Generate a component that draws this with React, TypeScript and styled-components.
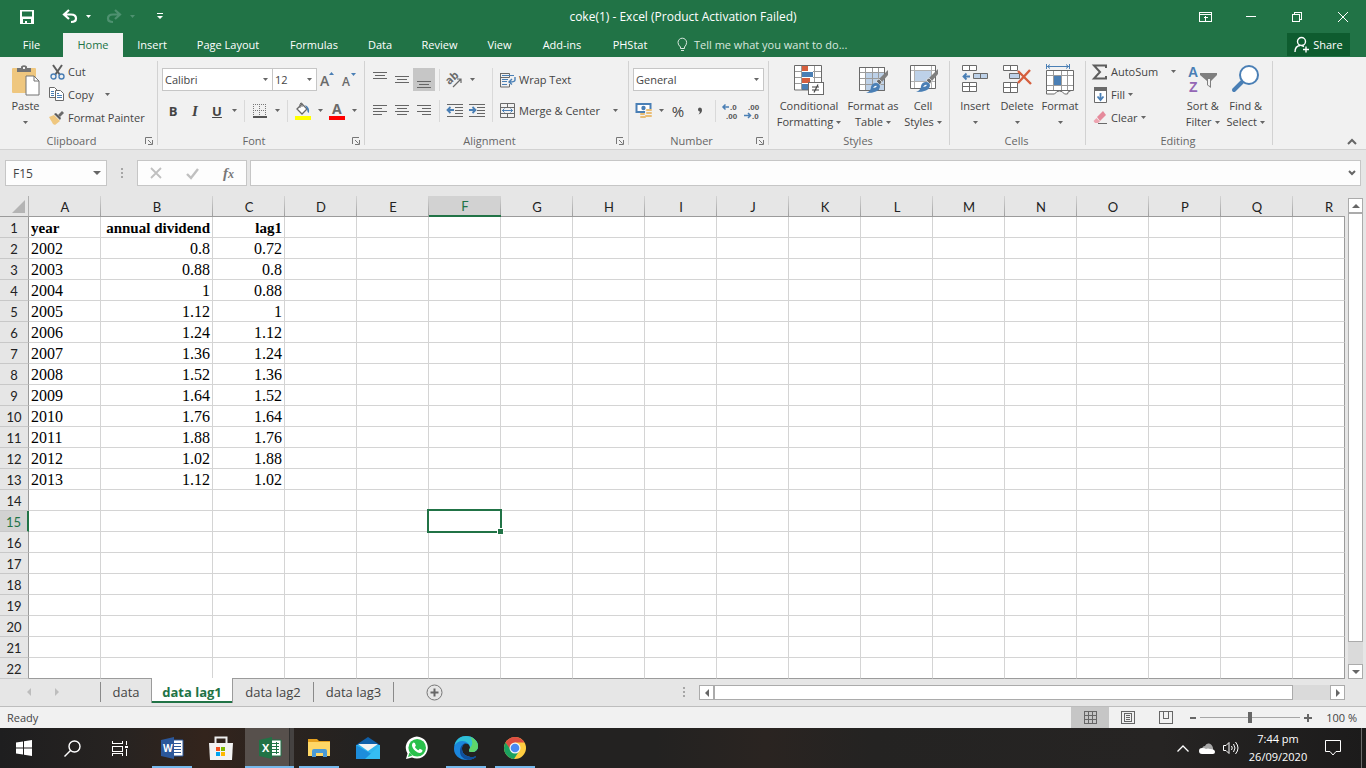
import React from "react";
import styled, { createGlobalStyle, css } from "styled-components";

const green = "#217346";
const ui = `"Open Sans", "Noto Sans", sans-serif`;
const blue = "#4a7fb5";
const ink = "#6a6a6a";

const GlobalStyle = createGlobalStyle`
  * { box-sizing: border-box; }
  body { margin: 0; background: #e6e6e6; font: 11px/16px ${ui}; color: #444; }
  button, input, select { font: inherit; color: inherit; margin: 0; padding: 0; border: 0; background: none; border-radius: 0; }
  button { display: inline-flex; align-items: center; white-space: nowrap; }
  svg { display: block; flex: none; overflow: visible; }
  input:focus, select:focus { outline: none; }
`;

const Page = styled.div`
  display: flex;
  flex-direction: column;
  min-height: 100vh;
  overflow: hidden;
`;

/* ---------- title bar and tabs ---------- */
const TitleBar = styled.header`
  display: grid;
  grid-template-columns: 1fr auto 1fr;
  align-items: center;
  height: 33px;
  background: ${green};
  color: #fff;
`;
const QuickAccess = styled.div`
  display: flex;
  align-items: center;
  padding-left: 19px;
`;
const QuickButton = styled.button<{ $w: number; $dim?: boolean }>`
  width: ${(p) => p.$w}px;
  height: 24px;
  color: ${(p) => (p.$dim ? "#4e9170" : "#fff")};
`;
const Title = styled.h1`
  margin: 0;
  font-size: 12px;
  font-weight: 400;
`;
const WindowControls = styled.div`
  display: flex;
  justify-content: flex-end;
`;
const WindowButton = styled.button`
  justify-content: center;
  width: 46px;
  height: 30px;
`;
const TabBar = styled.nav`
  display: flex;
  align-items: stretch;
  height: 24px;
  background: ${green};
  color: #fff;
`;
const RibbonTab = styled.button<{ $w: number; $active?: boolean }>`
  justify-content: center;
  width: ${(p) => p.$w}px;
  ${(p) => p.$active && css`background: #f1f1f1; color: ${green};`}
`;
const TellMe = styled.button`
  gap: 6px;
  margin-left: 14px;
  color: #d9e8df;
`;
const ShareButton = styled.button`
  justify-content: center;
  gap: 3px;
  width: 63px;
  height: 23px;
  margin: 0 16px 0 auto;
  background: #0e5c2f;
`;

/* ---------- ribbon ---------- */
const Ribbon = styled.div`
  display: flex;
  height: 93px;
  background: #f1f1f1;
  border-bottom: 1px solid #d2d2d2;
`;
const Group = styled.section<{ $w: number }>`
  display: flex;
  flex-direction: column;
  flex: none;
  width: ${(p) => p.$w}px;
`;
const GroupBody = styled.div`
  display: flex;
  flex: 1;
  padding-left: 4px;
`;
const GroupFooter = styled.footer`
  display: flex;
  align-items: center;
  height: 17px;
  padding-right: 2px;
  color: #666;
`;
const GroupName = styled.span`
  flex: 1;
  text-align: center;
`;
const Launcher = styled.button`
  justify-content: center;
  width: 12px;
  height: 14px;
`;
const Divider = styled.div`
  flex: none;
  width: 1px;
  margin: 4px 0;
  background: #d2d2d2;
`;
const Rows = styled.div`
  display: flex;
  flex-direction: column;
  gap: 8px;
  padding-top: 11px;
`;
const Row = styled.div`
  display: flex;
  align-items: center;
  height: 23px;
`;
const ToolRule = styled.div`
  width: 1px;
  height: 22px;
  margin: 0 4px;
  background: #d9d9d9;
`;
const TallRule = styled.div`
  width: 1px;
  height: 54px;
  margin: 11px 7px 0 4px;
  background: #d9d9d9;
`;
const Tool = styled.button<{ $on?: boolean }>`
  justify-content: center;
  width: 22px;
  height: 23px;
  font-size: 13px;
  font-weight: 700;
  background: ${(p) => (p.$on ? "#c6c6c6" : "transparent")};
`;
const ArrowButton = styled.button`
  justify-content: center;
  width: 12px;
  height: 23px;
`;
const Italic = styled.i`
  font-family: "Liberation Serif", serif;
  font-size: 15px;
`;
const Percent = styled.span`
  font-size: 15px;
  font-weight: 400;
`;
const SmallList = styled.div`
  display: flex;
  flex-direction: column;
  align-items: flex-start;
  padding: 3px 5px 0 2px;
`;
const SmallButton = styled.button<{ $gap?: number }>`
  gap: 3px;
  height: 23px;
  svg:last-child:not(:first-child) { margin-left: ${(p) => p.$gap ?? 0}px; }
`;
const IconSlot = styled.span`
  display: inline-flex;
  justify-content: center;
  width: 16px;
`;
const BigButton = styled.button<{ $w: number }>`
  flex-direction: column;
  width: ${(p) => p.$w}px;
  padding-top: 8px;
  height: 75px;
`;
const BigIcon = styled.span`
  display: flex;
  justify-content: center;
  height: 33px;
`;
const BigLine = styled.span`
  display: flex;
  align-items: center;
  gap: 3px;
  height: 16px;
`;
const Combo = styled.label<{ $w: number; $joined?: boolean }>`
  display: flex;
  align-items: center;
  width: ${(p) => p.$w}px;
  height: 23px;
  padding: 0 4px 0 2px;
  margin-left: ${(p) => (p.$joined ? -1 : 0)}px;
  background: #fff;
  border: 1px solid #c6c6c6;
`;
const ComboSelect = styled.select`
  appearance: none;
  flex: 1;
  min-width: 0;
  height: 20px;
`;
const Collapse = styled.button`
  align-self: flex-end;
  margin: 0 9px 4px auto;
`;

/* ---------- formula bar ---------- */
const FormulaRow = styled.div`
  display: flex;
  height: 46px;
  padding: 10px 5px;
`;
const NameBox = styled.label`
  display: flex;
  align-items: center;
  width: 102px;
  padding: 0 5px 0 7px;
  background: #fdfdfd;
  border: 1px solid #c6c6c6;
  font-size: 12px;
`;
const PlainInput = styled.input`
  flex: 1;
  min-width: 0;
  height: 22px;
`;
const DotsSlot = styled.div`
  display: flex;
  align-items: center;
  justify-content: center;
  width: 30px;
`;
const FormulaTools = styled.div`
  display: flex;
  justify-content: space-around;
  width: 110px;
  margin-right: 3px;
  background: #fdfdfd;
  border: 1px solid #c6c6c6;
`;
const FormulaBox = styled(NameBox)`
  flex: 1;
  padding: 0 4px 0 7px;
`;
const Fx = styled.i`
  font: italic 700 15px "Liberation Serif", serif;
  color: #777;
`;
const FxSub = styled.span`
  font-size: 12px;
`;

/* ---------- sheet ---------- */
const SheetArea = styled.main`
  display: flex;
  flex: 1;
`;
const Table = styled.table`
  flex: 1;
  min-width: 0;
  width: 100%;
  table-layout: fixed;
  border-collapse: separate;
  border-spacing: 0;
  font: 16px/18px "Liberation Serif", serif;
  color: #000;
`;
const headText = css`
  padding: 0;
  font: 13px/18px Lato, sans-serif;
  color: #222;
`;
const ColHead = styled.th<{ $on?: boolean; $last?: boolean }>`
  ${headText}
  height: 21px;
  padding: 2px 0 0 ${(p) => (p.$last ? 20 : 0)}px;
  border-bottom: 1px solid #9b9b9b;
  background: ${(p) => (p.$last ? "none" : "linear-gradient(#d4d4d4, #a0a0a0) right / 1px 100% no-repeat")};
  ${(p) => p.$on && css`
    padding-top: 1px;
    background-color: #d2d2d2;
    color: ${green};
    border-bottom: 2px solid ${green};
  `}
`;
const Corner = styled.th`
  padding: 0;
  height: 21px;
  border-bottom: 1px solid #9b9b9b;
  border-right: 1px solid #b0b0b0;
  svg { margin-left: 12px; }
`;
const RowHead = styled.th<{ $on?: boolean }>`
  ${headText}
  height: 21px;
  padding-top: 2px;
  border-right: 1px solid #9b9b9b;
  border-bottom: 1px solid #c8c8c8;
  ${(p) => p.$on && css`
    background: #d2d2d2;
    color: ${green};
    border-right: 2px solid ${green};
  `}
`;
const Cell = styled.td<{ $right?: boolean; $bold?: boolean }>`
  position: relative;
  height: 21px;
  padding: 2px 2px 0;
  background: #fff;
  border-right: 1px solid #d4d4d4;
  border-bottom: 1px solid #d4d4d4;
  text-align: ${(p) => (p.$right ? "right" : "left")};
  ${(p) => p.$bold && css`font-size: 15px; font-weight: 700;`}
  white-space: nowrap;
  &:last-child { border-right-color: #9b9b9b; }
  tr:last-child > & { border-bottom-color: #9b9b9b; }
`;
const Selection = styled.div`
  position: absolute;
  z-index: 1;
  inset: -2px;
  border: 2px solid ${green};
  &::after {
    content: "";
    position: absolute;
    right: -3px;
    bottom: -3px;
    width: 5px;
    height: 5px;
    background: ${green};
    box-shadow: 0 0 0 1px #fff;
  }
`;
const VScroll = styled.div`
  display: flex;
  flex-direction: column;
  width: 15px;
  margin: 2px 3px 0;
  background: #dadada;
`;
const scrollBox = css`
  justify-content: center;
  background: #fff;
  border: 1px solid #ababab;
`;
const ScrollButton = styled.button`
  ${scrollBox}
  width: 15px;
  height: 15px;
`;
const VThumb = styled.div`
  ${scrollBox}
  flex: 1;
  margin: 0 0 22px;
`;

/* ---------- sheet tabs and status bar ---------- */
const SheetBar = styled.div`
  display: flex;
  height: 28px;
  padding-right: 21px;
  border-bottom: 1px solid #bdbdbd;
`;
const SheetNav = styled.div`
  display: flex;
  width: 100px;
  padding-left: 15px;
`;
const NavButton = styled.button`
  justify-content: center;
  width: 28px;
  height: 26px;
`;
const SheetTab = styled.button<{ $w: number; $active?: boolean; $first?: boolean }>`
  position: relative;
  justify-content: center;
  width: ${(p) => p.$w}px;
  height: 20px;
  margin-top: 3px;
  padding-bottom: 1px;
  font-size: 13px;
  border-right: 1px solid #8a8a8a;
  ${(p) => p.$first && css`
    border-left: 1px solid #8a8a8a;
    border-right: 0;
  `}
  ${(p) => p.$active && css`
    height: 25px;
    margin-top: -1px;
    padding: 2px 0 0;
    background: #fff;
    color: ${green};
    font-weight: 700;
    border: solid #9b9b9b;
    border-width: 0 1px;
    box-shadow: inset 0 -2px ${green};
  `}
`;
const AddSheet = styled.button`
  height: 26px;
  margin-left: 32px;
`;
const HScroll = styled.div`
  display: flex;
  margin-top: 6px;
  width: 48%;
  height: 15px;
  background: #dadada;
`;
const HThumb = styled.div`
  ${scrollBox}
  flex: 1;
  margin-right: 37px;
`;
const SheetDots = styled.div`
  display: flex;
  align-items: center;
  height: 26px;
  margin: 0 14px 0 auto;
`;
const StatusBar = styled.footer`
  display: flex;
  align-items: center;
  height: 21px;
  padding: 0 9px 0 7px;
  background: #f1f1f1;
`;
const StatusText = styled.span`
  margin-right: auto;
`;
const ViewButton = styled.button<{ $on?: boolean }>`
  justify-content: center;
  width: 38px;
  height: 21px;
  background: ${(p) => (p.$on ? "#c6c6c6" : "transparent")};
`;
const ZoomButton = styled.button`
  justify-content: center;
  width: 15px;
  height: 21px;
`;
const ZoomSlider = styled.input`
  appearance: none;
  width: 100px;
  height: 11px;
  background: linear-gradient(#a6a6a6, #a6a6a6) center / 100% 1px no-repeat;
  &::-webkit-slider-thumb {
    appearance: none;
    width: 4px;
    height: 11px;
    background: #666;
  }
`;
const ZoomValue = styled.button`
  justify-content: flex-end;
  width: 42px;
`;

/* ---------- taskbar ---------- */
const Taskbar = styled.footer`
  display: flex;
  height: 40px;
  color: #fff;
  background: linear-gradient(90deg, #1e1e1f 0, #272321 9%, #33241c 15%, #2b231f 20%, #232221 27%, #232221 48%, #2a2421 56%, #242322 64%, #262423 85%, #1c1b1b 100%);
`;
const SystemButton = styled.button`
  justify-content: center;
  width: 48px;
  &:nth-child(3) { margin-right: 3px; }
`;
const AppButton = styled.button<{ $state?: "open" | "active" }>`
  justify-content: center;
  width: 49px;
  ${(p) => p.$state === "open" && css`
    background: linear-gradient(#76b9ed, #76b9ed) center bottom / 40px 2px no-repeat;
  `}
  ${(p) => p.$state === "active" && css`
    background: linear-gradient(90deg, #57504c 44px, #2f2e2d 44px, #2f2e2d 45px, #454241 45px);
    box-shadow: inset 0 -2px #76b9ed;
  `}
`;
const Tray = styled.div`
  display: flex;
  align-items: center;
  margin-left: auto;
  border-right: 1px solid #6b6b6b;
  margin-right: 4px;
`;
const TrayButton = styled.button`
  justify-content: center;
  width: 24px;
  height: 40px;
`;
const Clock = styled.time`
  width: 70px;
  text-align: center;
  line-height: 18px;
`;
const NoticeButton = styled(TrayButton)`
  width: 40px;
  margin-right: 8px;
`;

/* ---------- drawings ---------- */
type SvgProps = { w: number; h: number; children: React.ReactNode; crisp?: boolean };
const Svg = ({ w, h, children, crisp }: SvgProps) => (
  <svg width={w} height={h} viewBox={`0 0 ${w} ${h}`} fill="none" shapeRendering={crisp ? "crispEdges" : undefined} aria-hidden="true">
    {children}
  </svg>
);
const Caret = ({ big }: { big?: boolean }) =>
  big ? (
    <Svg w={8} h={4}><path d="M0 0h8L4 4z" fill="#666" /></Svg>
  ) : (
    <Svg w={5} h={3}><path d="M0 0h5L2.5 3z" fill="#666" /></Svg>
  );
const Triangle = ({ d, color = "#666" }: { d: string; color?: string }) => (
  <Svg w={8} h={8}><path d={d} fill={color} /></Svg>
);
const Dots = () => (
  <Svg w={2} h={10} crisp><path d="M0 0h2v2H0zM0 4h2v2H0zM0 8h2v2H0z" fill="#a6a6a6" /></Svg>
);
const SaveIcon = () => (
  <Svg w={16} h={16}><path fillRule="evenodd" fill="#fff" d="M1 1h14v14H1zM3 2.500v5h10v-5zM4 10v4h2v-2h2v2h4v-4z" /></Svg>
);
const UndoIcon = () => (
  <Svg w={16} h={14}><path d="M7 0L2 4.500l5 4.500M2.500 4.500H9c3 0 5 1.500 5 4 0 2-1.500 3.500-5 3.500" stroke="currentColor" strokeWidth="2.200" /></Svg>
);
const RedoIcon = () => (
  <Svg w={16} h={14}><path d="M9 0l5 4.500L9 9M13.500 4.500H7c-3 0-5 1.500-5 4C2 10.500 3.500 12 7 12" stroke="currentColor" strokeWidth="2.200" /></Svg>
);
const PasteIcon = () => (
  <Svg w={30} h={32}>
    <rect x="1" y="3" width="24" height="25" rx="1" fill="#efc77f" />
    <path d="M6 7V3h4V1.500Q13 -1 16 1.500V3h4v4z" fill="#737373" />
    <rect x="12" y="2" width="2" height="2" fill="#f1f1f1" />
    <path d="M15 11h8l5 5v14H15z" fill="#fff" stroke="#737373" />
    <path d="M23 11v5h5" stroke="#737373" />
  </Svg>
);
const CutIcon = () => (
  <Svg w={15} h={16}>
    <path d="M3 1l7 10M12 1L5 11" stroke="#5d5d5d" strokeWidth="2" />
    <circle cx="3.500" cy="12.500" r="2.500" stroke={blue} strokeWidth="1.400" />
    <circle cx="11.500" cy="12.500" r="2.500" stroke={blue} strokeWidth="1.400" />
  </Svg>
);
const CopyIcon = () => (
  <Svg w={16} h={15}>
    <path d="M.5.5h5l3 3v7h-8z" fill="#fff" stroke={ink} />
    <path d="M6.500 3.500h5l3 3v7h-8z" fill="#fff" stroke={ink} />
    <path d="M2 4.500h3M2 6.500h3M2 8.500h3M8 6.500h2M8 8.500h5M8 10.500h5" stroke={blue} />
  </Svg>
);
const PainterIcon = () => (
  <Svg w={16} h={14}>
    <path d="M0 6l5-2 6 6-5 4-2-1z" fill="#efc77f" />
    <path d="M5 3l2-1 5 5-1 2z" fill="#5d5d5d" />
    <path d="M9 4l4-4 2 2-4 4z" fill="#6a6a6a" />
  </Svg>
);
const GrowFont = ({ down }: { down?: boolean }) => (
  <Svg w={16} h={16}>
    <text x="0" y="14" fontFamily="Open Sans, sans-serif" fontSize={down ? 12 : 14} fontWeight="600" fill={ink}>A</text>
    <path d={down ? "M9 1h5l-2.500 3z" : "M9 3h5L11.500 0z"} fill={blue} />
  </Svg>
);
const BordersIcon = () => (
  <Svg w={14} h={14} crisp>
    <path d="M.5 0v13M6.500 0v13M12.500 0v13M0 .5h13M0 6.500h13" stroke="#777" strokeDasharray="1 1" />
    <path d="M0 13h14" stroke="#555" strokeWidth="2" />
  </Svg>
);
const FillIcon = () => (
  <Svg w={18} h={18}>
    <path d="M3 7l5-5 5 5-5 5z" fill="#fff" stroke={ink} strokeWidth="1.300" />
    <path d="M6 6V2q1.500-2.500 2 0v3" stroke={ink} />
    <path d="M11 3q5 2 4 8-2-1-2-4z" fill={blue} />
    <rect x="1" y="14" width="16" height="4" fill="#ff0" />
  </Svg>
);
const FontColorIcon = () => (
  <Svg w={18} h={18}>
    <text x="4" y="12" fontFamily="Open Sans, sans-serif" fontSize="14" fontWeight="700" fill={ink}>A</text>
    <rect x="1" y="14" width="16" height="4" fill="#f00" />
  </Svg>
);
const Lines = ({ d, h }: { d: string; h: number }) => (
  <Svg w={14} h={h} crisp><path d={d} stroke="#666" /></Svg>
);
const three = "M0 1.500h14M2 4.500h10M0 7.500h14";
const TopAlign = () => <Lines h={18} d={three} />;
const MidAlign = () => <Lines h={10} d={three} />;
const BottomAlign = () => <Lines h={19} d="M0 11.500h14M2 14.500h10M0 17.500h14" />;
const LeftAlign = () => <Lines h={11} d="M0 .5h14M0 3.500h9M0 6.500h14M0 9.500h9" />;
const CenterAlign = () => <Lines h={11} d="M0 .5h14M2 3.500h10M0 6.500h14M2 9.500h10" />;
const RightAlign = () => <Lines h={11} d="M0 .5h14M5 3.500h9M0 6.500h14M5 9.500h9" />;
const OrientIcon = () => (
  <Svg w={18} h={18}>
    <text x="1" y="12" transform="rotate(-42 5 10)" fontFamily="Open Sans, sans-serif" fontSize="11" fontWeight="700" fill={ink}>ab</text>
    <path d="M7 16l8-8M11 8h4v4" stroke={ink} strokeWidth="1.200" />
  </Svg>
);
const IndentIcon = ({ more }: { more?: boolean }) => (
  <Svg w={16} h={13}>
    <path d="M0 .5h16M8 3.500h8M8 6.500h8M8 9.500h8M0 12.500h16" stroke="#666" shapeRendering="crispEdges" />
    <path d={more ? "M0 6h6M3.500 3l3 3-3 3" : "M1 6h6M3.500 3l-3 3 3 3"} stroke={blue} strokeWidth="1.800" />
  </Svg>
);
const WrapIcon = () => (
  <Svg w={16} h={16}>
    <path d="M.5 1v14h9M.5 1.500h9M.5 5.500h9v-4M9.500 12v3" stroke={ink} />
    <path d="M2 3.500h12M2 7.500h6M2 9.500h5M2 12.500h5" stroke={blue} />
    <path d="M15 5v3q0 2-5 2M12 7l-3 3 3 2.500" stroke={blue} strokeWidth="1.400" />
  </Svg>
);
const MergeIcon = () => (
  <Svg w={16} h={15}>
    <path d="M.5.5h14v14H.5zM0 4.500h15M0 10.500h15M7.500 0v4M7.500 11v4" stroke={ink} />
    <path d="M2 7.500h11M4.500 5.500l-2 2 2 2M10.500 5.500l2 2-2 2" stroke={blue} />
  </Svg>
);
const CurrencyIcon = () => (
  <Svg w={18} h={18}>
    <rect x="1.500" y="2" width="14" height="8" fill="#fff" stroke={blue} strokeWidth="2" />
    <circle cx="8.500" cy="6" r="2.200" fill={blue} />
    <path d="M10 7h7v10H5v-5h5z" fill="#f1f1f1" />
    <g fill="#e9bd75"><rect x="11" y="7" width="6" height="2" rx="1" /><rect x="11" y="10" width="6" height="2" rx="1" /><rect x="10" y="13" width="7" height="2" rx="1" /><rect x="5" y="11" width="5" height="2" rx="1" /><rect x="5" y="14" width="6" height="2" rx="1" /></g>
  </Svg>
);
const CommaIcon = () => (
  <Svg w={6} h={8}><path d="M1 2.500Q1 .5 3 .5T5 3Q5 6 1.500 7.500 3 6 2.800 4.500 1 4.500 1 2.500z" fill="#555" /></Svg>
);
const DecimalIcon = ({ less }: { less?: boolean }) => (
  <Svg w={18} h={16}>
    <text x={less ? 4 : 8} y="7" fontFamily="Liberation Sans, sans-serif" fontSize="8" fontWeight="700" fill="#555">{less ? ".00" : ".0"}</text>
    <text x={less ? 8 : 4} y="16" fontFamily="Liberation Sans, sans-serif" fontSize="8" fontWeight="700" fill="#555">{less ? ".0" : ".00"}</text>
    <path d={less ? "M0 12.500h6M4 10l2.500 2.500L4 15" : "M1 4h6M3.500 1.500L1 4l2.500 2.500"} stroke={blue} strokeWidth="1.500" />
  </Svg>
);
const ConditionalIcon = () => (
  <Svg w={30} h={31}>
    <rect x=".5" y=".5" width="27" height="25" fill="#fff" />
    <path d="M8 1h6v5H8zM8 13h8v5H8z" fill="#d65f3e" /><path d="M8 7h11v5H8zM8 19h6v6H8z" fill={blue} />
    <path d="M.5.5h27v24.500H.5z" stroke={ink} />
    <path d="M7.500 1v24M20.500 1v24M1 6.500h7M19 6.500h8M1 12.500h7M19 12.500h8M1 18.500h7M14 18.500h13" stroke="#9b9b9b" />
    <rect x="14.500" y="17.500" width="15" height="12" fill="#fff" stroke={ink} />
    <path d="M18 22h7M18 25h7M24 19.500l-4 8" stroke="#444" strokeWidth="1.200" />
  </Svg>
);
const Brush = () => (
  <>
    <path d="M29 5v5l-6 7-3-3z" fill="#7f7f7f" />
    <path d="M20 14l3 3-2 3-4-4z" fill="#6a6a6a" stroke="#fff" strokeWidth=".6" />
    <path d="M17 18q4 0 4 4-1 6-14 6 5-2 5-6 1-4 5-4z" fill={blue} />
    <path d="M14 23q2-3 4-2-1 2-4 2z" fill="#fff" />
  </>
);
const TableIcon = () => (
  <Svg w={28} h={31}>
    <path d="M.5 2.500h25v23H.5z" fill="#fff" stroke={ink} /><path d="M7 8h18v17H7z" fill="#bdd1e8" />
    <path d="M6.500 3v22M13.500 3v22M19.500 3v22M1 7.500h24M1 13.500h24M1 19.500h24" stroke="#9b9b9b" />
    <path d="M.5 2.500h25v23H.5z" stroke={ink} /><Brush />
  </Svg>
);
const CellStyleIcon = () => (
  <Svg w={28} h={31}>
    <path d="M1.500.5h25v23h-25z" fill="#fff" />
    <path d="M6 6h16v10H6z" fill="#bdd1e8" />
    <path d="M5.500 1v22M22.500 1v22M2 5.500h24M2 16.500h24" stroke="#b0b0b0" />
    <path d="M1.500.5h25v23h-25z" stroke={ink} /><g transform="translate(0 -1)"><Brush /></g>
  </Svg>
);
const InsertIcon = () => (
  <Svg w={28} h={28}>
    <path d="M1.500.5h14v5h-14zM8.500.5v5M1.500 17.500h14v9h-14zM8.500 17v9M1.500 21.500h14" fill="#fff" stroke={ink} />
    <path d="M12.500 8.500h14v5h-14zM19.500 8.500v5" fill="#bdd1e8" stroke={ink} />
    <path d="M2 11.500h7M5.500 8.500l-3 3 3 3" stroke={blue} strokeWidth="1.800" />
  </Svg>
);
const DeleteIcon = () => (
  <Svg w={30} h={28}>
    <path d="M1.500.5h14v5h-14zM8.500.5v5M1.500 17.500h14v10h-14zM8.500 17v10M1.500 22.500h14" fill="#fff" stroke={ink} />
    <path d="M7.500 8.500h10v5h-10z" fill="#bdd1e8" stroke={ink} />
    <path d="M16 6l13 13M28 5L16 18" stroke="#d65f3e" strokeWidth="2.400" />
  </Svg>
);
const FormatIcon = () => (
  <Svg w={30} h={33}>
    <path d="M2 1.500h22M1.500 -1v5M24.500 -1v5M5 -.5l-2.500 2L5 3.500M21 -.5l2.500 2-2.500 2" stroke={blue} />
    <path d="M1.500 5.500h27v20h-27z" fill="#fff" stroke={ink} />
    <path d="M8.500 6v19M16.500 6v19M22.500 6v19M2 10.500h26M2 20.500h26" stroke="#9b9b9b" />
    <path d="M9 11h7v9H9z" fill={blue} />
    <path d="M1.500 26v3h8q2-3 5-3t5 3h3q0-3 3-3" stroke={ink} fill="#fff" />
  </Svg>
);
const SigmaIcon = () => (
  <Svg w={16} h={16}><path d="M14 4V1.500H2L8 8l-6 6.500h12V12" stroke="#5d5d5d" strokeWidth="2" /></Svg>
);
const FillDownIcon = () => (
  <Svg w={15} h={16}>
    <path d="M1.500.5h12v15h-12z" fill="#fff" stroke={ink} /><path d="M1 0h13v4H1z" fill={ink} />
    <path d="M7.500 6v7M4.500 9.500l3 3.500 3-3.500" stroke={blue} strokeWidth="1.800" />
  </Svg>
);
const EraserIcon = () => (
  <Svg w={15} h={14}>
    <path d="M4 6l6-6 3 4-6 6z" fill="#e58a9b" /><path d="M3.500 7L7 10.500 5 12H2L.5 10z" fill="#eda4b0" />
    <path d="M5 12.500h9" stroke={ink} />
  </Svg>
);
const SortIcon = () => (
  <Svg w={30} h={30}>
    <text x="0" y="12" fontFamily="Liberation Sans, sans-serif" fontSize="14" fontWeight="700" fill={blue}>A</text>
    <text x="1" y="27" fontFamily="Liberation Sans, sans-serif" fontSize="14" fontWeight="700" fill="#9467b5">Z</text>
    <path d="M12 8h17v2l-6 6v7l-4-3v-4l-7-6z" fill="#7f7f7f" /><path d="M20 14h2v7l-2-1z" fill="#f1f1f1" />
  </Svg>
);
const FindIcon = () => (
  <Svg w={30} h={30}>
    <path d="M11 17l-8 8" stroke={blue} strokeWidth="4" strokeLinecap="round" />
    <circle cx="18" cy="10" r="9" fill="#fff" stroke={blue} strokeWidth="2" />
  </Svg>
);
const LauncherIcon = () => (
  <Svg w={8} h={8}><path d="M.5 7V.5H7M3 3l3.500 3.500M7.500 3v4.500H3" stroke="#777" /></Svg>
);

/* taskbar drawings */
const WordIcon = () => (
  <Svg w={24} h={22}>
    <path d="M12 3h11v16H12z" fill="#fff" stroke="#2b579a" /><path d="M14 6.500h7M14 9.500h7M14 12.500h7M14 15.500h7" stroke="#2b579a" />
    <path d="M1 3l13-3v22L1 19z" fill="#2b579a" />
    <text x="3" y="15" fontFamily="Open Sans, sans-serif" fontSize="10" fontWeight="700" fill="#fff">W</text>
  </Svg>
);
const ExcelIcon = () => (
  <Svg w={24} h={22}>
    <path d="M12 3h11v16H12z" fill="#fff" stroke="#217346" /><path d="M14 6.500h7M14 9.500h7M14 12.500h7M14 15.500h7M18.500 5v12" stroke="#217346" />
    <path d="M1 3l13-3v22L1 19z" fill="#217346" />
    <text x="4" y="15" fontFamily="Open Sans, sans-serif" fontSize="11" fontWeight="700" fill="#fff">X</text>
  </Svg>
);
const StoreIcon = () => (
  <Svg w={24} h={24}>
    <path d="M6.500 8V1.500h11V8" stroke="#eee" strokeWidth="2" /><path d="M0 7h24l-1 17H1z" fill="#f3f3f3" />
    <path d="M7 11h4v4H7z" fill="#f25022" /><path d="M12 11h4v4h-4z" fill="#7fba00" /><path d="M7 16h4v4H7z" fill="#00a4ef" /><path d="M12 16h4v4h-4z" fill="#ffb900" />
  </Svg>
);
const FolderIcon = () => (
  <Svg w={22} h={18}>
    <path d="M0 0h9l2 2h11v4H0z" fill="#e6a11f" /><path d="M0 3h22v14H0z" fill="#ffd766" />
    <path d="M4 18v-6q0-2 2-2h11q2 0 2 2v6h-4v-4H8v4z" fill="#4a9ad6" />
  </Svg>
);
const MailIcon = () => (
  <Svg w={24} h={22}>
    <path d="M0 8l12-8 12 8z" fill="#0f5fa8" /><path d="M0 8h24v14H0z" fill="#2fb5ee" />
    <path d="M0 8l24 14H0z" fill="#1d8ddb" /><path d="M24 8L9 22h15z" fill="#35bdf3" /><path d="M2 7h20l-10 7z" fill="#f2f2f2" />
  </Svg>
);
const WhatsAppIcon = () => (
  <Svg w={22} h={22}>
    <path d="M0 22l1.500-5.500A11 11 0 1 1 6 20.500z" fill="#fff" /><circle cx="11.200" cy="10.800" r="8.800" fill="#29c04b" /><path d="M2 20l1.500-4.500 3 3z" fill="#29c04b" />
    <path d="M7.500 5.500c-3 2-1 6 2 8.500 3 2.500 6 2.500 7 0l-.2-1-2.500-1.300-1.300 1.500c-1.500-.5-3-2-3.600-3.200l1-1.300-1-2.700z" fill="#fff" />
  </Svg>
);
const EdgeIcon = () => (
  <Svg w={24} h={24}>
    <path d="M0 13C0 5 5 0 12 0s12 5 12 10c0 4-3 6-6 6-2 0-3-.6-3-1.600 0-.9 1-1.300 1-3C16 9 14 7.500 11.500 7.500 8.500 7.500 8 11 8 13c0 6 6 8 10 8 2 0 3.500-.8 4-.5.600.4-3.500 3.500-9 3.500C5 24 0 19 0 13z" fill="#1b86dc" />
    <path d="M.5 9.500C2 3 7 0 12 0c7 0 12 5 12 10 0 4-3 6-6 6-2 0-3-.6-3-1.600 0-.9 1-1.300 1-3C16 8 12.500 5 8.500 5 5 5 2 7 .5 9.500z" fill="#2fc0d6" />
    <path d="M16 .7c5 1.800 8 5.500 8 9.300 0 4-3 6-6 6-2 0-3-.6-3-1.600 0-.9 1-1.300 1-3 3-2 3-7 0-10.700z" fill="#5fd56a" />
    <path d="M11.500 7.500C8.500 9 8 11 8 13c0 6 6 8 10 8 2 0 3.500-.8 4-.5.600.4-3.500 3.500-8 3.500C9 23 6 20 6 15.500c0-4 2-8 5.500-8z" fill="#104f9c" />
  </Svg>
);
const ChromeIcon = () => (
  <Svg w={22} h={22}>
    <circle cx="11" cy="11" r="11" fill="#ffcd40" />
    <path d="M1.500 5.500A11 11 0 0 1 20.500 5.500H11L6 13z" fill="#dd4f43" />
    <path d="M1.500 5.500A11 11 0 0 0 10 22l5.500-8.500-9-1z" fill="#1ba15f" />
    <circle cx="11" cy="11" r="5.500" fill="#f5f5f5" /><circle cx="11" cy="11" r="4.300" fill="#4a8af4" />
  </Svg>
);

/* ---------- content ---------- */
const tabs: [string, number][] = [["Insert", 58], ["Page Layout", 94], ["Formulas", 78], ["Data", 54], ["Review", 65], ["View", 55], ["Add-ins", 70], ["PHStat", 66]];
const columns = "ABCDEFGHIJKLMNOPQR".split("");
const data: string[][] = [
  ["year", "annual dividend", "lag1"],
  ["2002", "0.8", "0.72"],
  ["2003", "0.88", "0.8"],
  ["2004", "1", "0.88"],
  ["2005", "1.12", "1"],
  ["2006", "1.24", "1.12"],
  ["2007", "1.36", "1.24"],
  ["2008", "1.52", "1.36"],
  ["2009", "1.64", "1.52"],
  ["2010", "1.76", "1.64"],
  ["2011", "1.88", "1.76"],
  ["2012", "1.02", "1.88"],
  ["2013", "1.12", "1.02"],
];
const rowCount = 22;

const RibbonGroup = ({ name, w, launcher, children }: { name: string; w: number; launcher?: boolean; children: React.ReactNode }) => (
  <>
    <Group $w={w} aria-label={name}>
      <GroupBody>{children}</GroupBody>
      <GroupFooter>
        <GroupName>{name}</GroupName>
        {launcher && <Launcher aria-label={`${name} settings`}><LauncherIcon /></Launcher>}
      </GroupFooter>
    </Group>
    <Divider />
  </>
);
const Big = ({ w, icon, first, second }: { w: number; icon: React.ReactNode; first: string; second?: string }) => (
  <BigButton $w={w}>
    <BigIcon>{icon}</BigIcon>
    <BigLine>{first}</BigLine>
    <BigLine>{second}<Caret /></BigLine>
  </BigButton>
);
const ComboBox = ({ label, value, w, joined }: { label: string; value: string; w: number; joined?: boolean }) => (
  <Combo $w={w} $joined={joined}>
    <ComboSelect aria-label={label} defaultValue={value}><option>{value}</option></ComboSelect>
    <Caret />
  </Combo>
);
const More = ({ label }: { label: string }) => <ArrowButton aria-label={label}><Caret /></ArrowButton>;

export default function App() {
  return (
    <Page>
      <GlobalStyle />
      <TitleBar>
        <QuickAccess>
          <QuickButton $w={43} aria-label="Save"><SaveIcon /></QuickButton>
          <QuickButton $w={24} aria-label="Undo"><UndoIcon /></QuickButton>
          <QuickButton $w={20} aria-label="Undo list"><Svg w={5} h={3}><path d="M0 0h5L2.500 3z" fill="#fff" /></Svg></QuickButton>
          <QuickButton $w={24} $dim aria-label="Redo"><RedoIcon /></QuickButton>
          <QuickButton $w={27} $dim aria-label="Redo list"><Svg w={5} h={3}><path d="M0 0h5L2.500 3z" fill="#4e9170" /></Svg></QuickButton>
          <QuickButton $w={8} aria-label="Customize toolbar"><Svg w={6} h={7}><path d="M0 0h6v1H0zM0 3h6L3 6z" fill="#fff" /></Svg></QuickButton>
        </QuickAccess>
        <Title>coke(1) - Excel (Product Activation Failed)</Title>
        <WindowControls>
          <WindowButton aria-label="Ribbon display options"><Svg w={13} h={10} crisp><path d="M.5.5h12v9H.5zM0 2.500h13M6.500 4v5M4.500 5.500h4" stroke="#fff" /></Svg></WindowButton>
          <WindowButton aria-label="Minimize"><Svg w={10} h={1} crisp><path d="M0 .5h10" stroke="#fff" /></Svg></WindowButton>
          <WindowButton aria-label="Restore"><Svg w={10} h={10} crisp><path d="M.5 2.500h7v7h-7zM2.500 2V.5h7v7H8" stroke="#fff" /></Svg></WindowButton>
          <WindowButton aria-label="Close"><Svg w={10} h={10}><path d="M0 0l10 10M10 0L0 10" stroke="#fff" /></Svg></WindowButton>
        </WindowControls>
      </TitleBar>
      <TabBar>
        <RibbonTab $w={63}>File</RibbonTab>
        <RibbonTab $w={60} $active>Home</RibbonTab>
        {tabs.map(([name, w]) => <RibbonTab key={name} $w={w}>{name}</RibbonTab>)}
        <TellMe>
          <Svg w={11} h={14}><path d="M3.500 10.500V9Q1 7 1 4.500a4.300 4.300 0 0 1 8.600 0Q9.600 7 7.500 9v1.500zM4 12.500h3" stroke="#d9e8df" /></Svg>
          Tell me what you want to do...
        </TellMe>
        <ShareButton>
          <Svg w={16} h={17}><circle cx="7.500" cy="5.500" r="4" stroke="#fff" strokeWidth="1.400" /><path d="M1 16q0-6 5-6.500M8 9.500l2 1M9 13.500h6M12 10.500v6" stroke="#fff" strokeWidth="1.400" /></Svg>
          Share
        </ShareButton>
      </TabBar>

      <Ribbon>
        <RibbonGroup name="Clipboard" w={157} launcher>
          <Big w={43} icon={<PasteIcon />} first="Paste" />
          <SmallList>
            <SmallButton><IconSlot><CutIcon /></IconSlot>Cut</SmallButton>
            <SmallButton $gap={8}><IconSlot><CopyIcon /></IconSlot>Copy<Caret /></SmallButton>
            <SmallButton><IconSlot><PainterIcon /></IconSlot>Format Painter</SmallButton>
          </SmallList>
        </RibbonGroup>
        <RibbonGroup name="Font" w={206} launcher>
          <Rows>
            <Row>
              <ComboBox label="Font" value="Calibri" w={111} />
              <ComboBox label="Font size" value="12" w={45} joined />
              <Tool aria-label="Increase font size"><GrowFont /></Tool>
              <Tool aria-label="Decrease font size"><GrowFont down /></Tool>
            </Row>
            <Row>
              <Tool>B</Tool>
              <Tool><Italic>I</Italic></Tool>
              <Tool><u>U</u></Tool>
              <More label="Underline styles" />
              <ToolRule />
              <Tool aria-label="Borders"><BordersIcon /></Tool>
              <More label="Border styles" />
              <ToolRule />
              <Tool aria-label="Fill color"><FillIcon /></Tool>
              <More label="Fill colors" />
              <Tool aria-label="Font color"><FontColorIcon /></Tool>
              <More label="Font colors" />
            </Row>
          </Rows>
        </RibbonGroup>
        <RibbonGroup name="Alignment" w={263} launcher>
          <Rows>
            <Row>
              <Tool aria-label="Top align"><TopAlign /></Tool>
              <Tool aria-label="Middle align"><MidAlign /></Tool>
              <Tool $on aria-label="Bottom align"><BottomAlign /></Tool>
              <ToolRule />
              <Tool aria-label="Orientation"><OrientIcon /></Tool>
              <More label="Orientation options" />
            </Row>
            <Row>
              <Tool aria-label="Align left"><LeftAlign /></Tool>
              <Tool aria-label="Center"><CenterAlign /></Tool>
              <Tool aria-label="Align right"><RightAlign /></Tool>
              <ToolRule />
              <Tool aria-label="Decrease indent"><IndentIcon /></Tool>
              <Tool aria-label="Increase indent"><IndentIcon more /></Tool>
            </Row>
          </Rows>
          <TallRule />
          <Rows>
            <SmallButton><IconSlot><WrapIcon /></IconSlot>Wrap Text</SmallButton>
            <SmallButton $gap={10}><IconSlot><MergeIcon /></IconSlot>Merge &amp; Center<Caret /></SmallButton>
          </Rows>
        </RibbonGroup>
        <RibbonGroup name="Number" w={139} launcher>
          <Rows>
            <Row><ComboBox label="Number format" value="General" w={131} /></Row>
            <Row>
              <Tool aria-label="Accounting format"><CurrencyIcon /></Tool>
              <More label="Currencies" />
              <Tool><Percent>%</Percent></Tool>
              <Tool aria-label="Comma style"><CommaIcon /></Tool>
              <ToolRule />
              <Tool aria-label="Increase decimal"><DecimalIcon /></Tool>
              <Tool aria-label="Decrease decimal"><DecimalIcon less /></Tool>
            </Row>
          </Rows>
        </RibbonGroup>
        <RibbonGroup name="Styles" w={180}>
          <Big w={72} icon={<ConditionalIcon />} first="Conditional" second="Formatting" />
          <Big w={56} icon={<TableIcon />} first="Format as" second="Table" />
          <Big w={44} icon={<CellStyleIcon />} first="Cell" second="Styles" />
        </RibbonGroup>
        <RibbonGroup name="Cells" w={135}>
          <Big w={42} icon={<InsertIcon />} first="Insert" />
          <Big w={42} icon={<DeleteIcon />} first="Delete" />
          <Big w={44} icon={<FormatIcon />} first="Format" />
        </RibbonGroup>
        <RibbonGroup name="Editing" w={186}>
          <SmallList>
            <SmallButton $gap={10}><IconSlot><SigmaIcon /></IconSlot>AutoSum<Caret /></SmallButton>
            <SmallButton><IconSlot><FillDownIcon /></IconSlot>Fill<Caret /></SmallButton>
            <SmallButton><IconSlot><EraserIcon /></IconSlot>Clear<Caret /></SmallButton>
          </SmallList>
          <Big w={43} icon={<SortIcon />} first="Sort &" second="Filter" />
          <Big w={43} icon={<FindIcon />} first="Find &" second="Select" />
        </RibbonGroup>
        <Collapse aria-label="Collapse the ribbon"><Svg w={10} h={7}><path d="M1 6l4-4 4 4" stroke="#666" strokeWidth="2" /></Svg></Collapse>
      </Ribbon>

      <FormulaRow>
        <NameBox>
          <PlainInput aria-label="Name box" defaultValue="F15" />
          <Caret big />
        </NameBox>
        <DotsSlot><Dots /></DotsSlot>
        <FormulaTools>
          <button aria-label="Cancel"><Svg w={12} h={10}><path d="M1 0l10 10M11 0L1 10" stroke="#c0c0c0" strokeWidth="1.800" /></Svg></button>
          <button aria-label="Enter"><Svg w={13} h={11}><path d="M1 6l4 4 7-9" stroke="#c0c0c0" strokeWidth="2.400" /></Svg></button>
          <button aria-label="Insert function"><Fx>f<FxSub>x</FxSub></Fx></button>
        </FormulaTools>
        <FormulaBox>
          <PlainInput aria-label="Formula" />
          <Svg w={8} h={6}><path d="M1 1l3 3 3-3" stroke="#666" strokeWidth="2" /></Svg>
        </FormulaBox>
      </FormulaRow>

      <SheetArea>
        <Table>
          <colgroup>
            <col width={29} />
            {columns.map((c) => <col key={c} width={c === "B" ? 112 : c === "R" ? undefined : 72} />)}
          </colgroup>
          <thead>
            <tr>
              <Corner aria-label="Select all"><Svg w={13} h={13}><path d="M13 0v13H0z" fill="#b4b4b4" /></Svg></Corner>
              {columns.map((c) => <ColHead key={c} scope="col" $on={c === "F"} $last={c === "R"}>{c}</ColHead>)}
            </tr>
          </thead>
          <tbody>
            {Array.from({ length: rowCount }, (_, r) => (
              <tr key={r}>
                <RowHead scope="row" $on={r === 14}>{r + 1}</RowHead>
                {columns.map((c, i) => (
                  <Cell key={c} $right={i > 0} $bold={r === 0}>
                    {data[r]?.[i]}
                    {r === 14 && c === "F" && <Selection />}
                  </Cell>
                ))}
              </tr>
            ))}
          </tbody>
        </Table>
        <VScroll>
          <ScrollButton aria-label="Scroll up"><Triangle d="M0 6l4-4 4 4z" /></ScrollButton>
          <VThumb />
          <ScrollButton aria-label="Scroll down"><Triangle d="M0 2h8L4 6z" /></ScrollButton>
        </VScroll>
      </SheetArea>

      <SheetBar>
        <SheetNav>
          <NavButton aria-label="Previous sheet"><Triangle color="#bdbdbd" d="M6 0v8L2 4z" /></NavButton>
          <NavButton aria-label="Next sheet"><Triangle color="#bdbdbd" d="M2 0v8l4-4z" /></NavButton>
        </SheetNav>
        <SheetTab $w={51} $first>data</SheetTab>
        <SheetTab $w={82} $active>data lag1</SheetTab>
        <SheetTab $w={81}>data lag2</SheetTab>
        <SheetTab $w={80}>data lag3</SheetTab>
        <AddSheet aria-label="New sheet"><Svg w={17} h={17}><circle cx="8.500" cy="8.500" r="7.500" stroke="#777" /><path d="M4.500 8.500h8M8.500 4.500v8" stroke="#666" strokeWidth="2" /></Svg></AddSheet>
        <SheetDots><Dots /></SheetDots>
        <HScroll>
          <ScrollButton aria-label="Scroll left"><Triangle d="M6 0v8L2 4z" /></ScrollButton>
          <HThumb />
          <ScrollButton aria-label="Scroll right"><Triangle d="M2 0v8l4-4z" /></ScrollButton>
        </HScroll>
      </SheetBar>
      <StatusBar>
        <StatusText>Ready</StatusText>
        <ViewButton $on aria-label="Normal view"><Svg w={13} h={13} crisp><path d="M.5.5h12v12H.5zM4.500 0v13M8.500 0v13M0 4.500h13M0 8.500h13" stroke="#666" /></Svg></ViewButton>
        <ViewButton aria-label="Page layout view"><Svg w={14} h={13} crisp><path d="M.5.5h13v12H.5zM3.500 2.500h7v8h-7zM5 4.500h4M5 6.500h4M5 8.500h4" stroke="#666" /></Svg></ViewButton>
        <ViewButton aria-label="Page break preview"><Svg w={14} h={13} crisp><path d="M.5.5h13v12H.5zM4.500 0v7M9.500 0v7M4 7.500h6" stroke="#666" /></Svg></ViewButton>
        <ZoomButton aria-label="Zoom out"><Svg w={6} h={2} crisp><path d="M0 1h6" stroke="#666" strokeWidth="2" /></Svg></ZoomButton>
        <ZoomSlider type="range" min={10} max={190} defaultValue={100} aria-label="Zoom" />
        <ZoomButton aria-label="Zoom in"><Svg w={8} h={8} crisp><path d="M0 4h8M4 0v8" stroke="#666" strokeWidth="2" /></Svg></ZoomButton>
        <ZoomValue>100 %</ZoomValue>
      </StatusBar>

      <Taskbar>
        <SystemButton aria-label="Start"><Svg w={16} h={16}><path d="M0 2.500L7 1.500V7.500H0zM8 1.300L16 0v7.500H8zM0 8.500h7v6L0 13.500zM8 8.500h8V16l-8-1.200z" fill="#fff" /></Svg></SystemButton>
        <SystemButton aria-label="Search"><Svg w={17} h={17}><circle cx="10.500" cy="6.500" r="5.500" stroke="#fff" strokeWidth="1.400" /><path d="M6.500 10.500L.5 16.500" stroke="#fff" strokeWidth="1.400" /></Svg></SystemButton>
        <SystemButton aria-label="Task view"><Svg w={17} h={15} crisp><path d="M.5 0v2.500h10V0M.5 5.500h10v5H.5zM.5 15v-2.500h10V15M14.500 0v4M14.500 8v7" stroke="#fff" /><path d="M13 5h3v2h-3z" fill="#fff" /></Svg></SystemButton>
        <AppButton $state="open" aria-label="Word"><WordIcon /></AppButton>
        <AppButton aria-label="Store"><StoreIcon /></AppButton>
        <AppButton $state="active" aria-label="Excel"><ExcelIcon /></AppButton>
        <AppButton $state="open" aria-label="File Explorer"><FolderIcon /></AppButton>
        <AppButton aria-label="Mail"><MailIcon /></AppButton>
        <AppButton aria-label="WhatsApp"><WhatsAppIcon /></AppButton>
        <AppButton $state="open" aria-label="Edge"><EdgeIcon /></AppButton>
        <AppButton $state="open" aria-label="Chrome"><ChromeIcon /></AppButton>
        <Tray>
          <TrayButton aria-label="Hidden icons"><Svg w={12} h={7}><path d="M.5 6.500L6 1l5.500 5.500" stroke="#fff" strokeWidth="1.300" /></Svg></TrayButton>
          <TrayButton aria-label="OneDrive"><Svg w={16} h={11}><path d="M3 7q0-4 3-4 1-3 4-2.500T14 5v2z" fill="#a8a8a8" /><path d="M3 11q-3 0-3-3t3-3q3 0 4 1 2-1 4 0 5 0 5 3 0 2-2 2z" fill="#fff" /></Svg></TrayButton>
          <TrayButton aria-label="Volume"><Svg w={16} h={14}><path d="M.5 4.500H3l3-3v11l-3-3H.5zM8.500 5q1.500 2 0 4M10.500 3q3 4 0 8M12.500 1q5 6 0 12" stroke="#fff" /></Svg></TrayButton>
          <Clock>7:44 pm<br />26/09/2020</Clock>
          <NoticeButton aria-label="Notifications"><Svg w={16} h={16}><path d="M.5.5h15v11H11L8 15l-3-3.500H.5z" stroke="#fff" /></Svg></NoticeButton>
        </Tray>
      </Taskbar>
    </Page>
  );
}
